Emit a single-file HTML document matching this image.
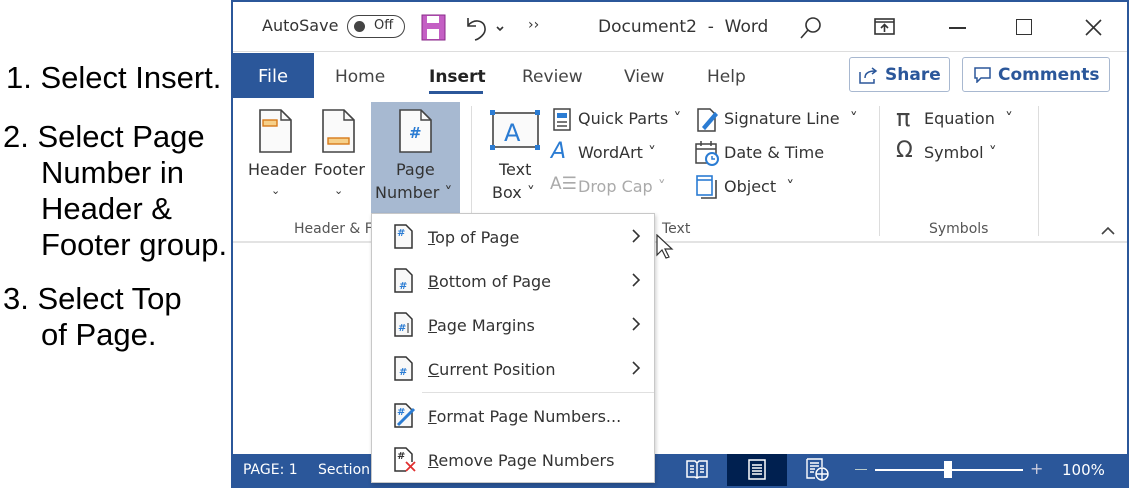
<!DOCTYPE html>
<html><head><meta charset="utf-8"><style>
*{margin:0;padding:0;box-sizing:border-box}
body{width:1131px;height:488px;background:#fff;position:relative;overflow:hidden;font-family:"Liberation Sans",sans-serif}
.a{position:absolute;white-space:nowrap}
.ins{font-size:31px;color:#000;line-height:36px}
.win{position:absolute;left:231px;top:0;width:898px;height:488px;border:2px solid #2b579a;border-bottom:none;background:#fff}
.ui{font-family:"DejaVu Sans",sans-serif;color:#333}
.t{font-size:17px;color:#444}
.r{font-size:16px;color:#333}
.g{font-size:14px;color:#555}
.m{font-size:16px;color:#333}
.ch{font-size:11px}
</style></head><body>
<div class="a ins" style="left:6px;top:60px">1. Select Insert.</div>
<div class="a ins" style="left:3px;top:119px">2. Select Page</div>
<div class="a ins" style="left:41px;top:155px">Number in</div>
<div class="a ins" style="left:41px;top:191px">Header &amp;</div>
<div class="a ins" style="left:41px;top:227px">Footer group.</div>
<div class="a ins" style="left:3px;top:281px">3. Select Top</div>
<div class="a ins" style="left:41px;top:317px">of Page.</div>

<div class="win"></div>
<!-- title bar -->
<div class="a ui" style="left:262px;top:16px;font-size:16px;color:#333">AutoSave</div>
<div class="a" style="left:347px;top:15px;width:58px;height:23px;border:1.5px solid #444;border-radius:12px"></div>
<div class="a" style="left:354px;top:21px;width:11px;height:11px;border-radius:50%;background:#444"></div>
<div class="a ui" style="left:374px;top:18px;font-size:13px;color:#333">Off</div>
<svg class="a" style="left:421px;top:14px" width="26" height="28"><rect x="1" y="1" width="23" height="25" fill="#c45fc4" stroke="#8a2a8a"/><rect x="6" y="2" width="12" height="7" fill="#fff"/><rect x="6" y="15" width="12" height="10" fill="#fff"/></svg>
<svg class="a" style="left:464px;top:14px" width="50" height="28" fill="none" stroke="#333" stroke-width="1.6"><path d="M4 4v8h8M4 12c4-7 16-7 17 2 1 6-6 11-10 12"/><path d="M33 13l3 3 3-3"/></svg>
<div class="a ui" style="left:528px;top:17px;font-size:14px;color:#333">››</div>
<div class="a ui" style="left:598px;top:17px;font-size:17px;color:#333">Document2 &nbsp;- &nbsp;Word</div>
<svg class="a" style="left:799px;top:16px" width="24" height="24" fill="none" stroke="#333" stroke-width="1.6"><circle cx="14" cy="9" r="7"/><path d="M9 14L2 22"/></svg>
<svg class="a" style="left:874px;top:18px" width="22" height="18" fill="none" stroke="#333" stroke-width="1.6"><rect x="1" y="1" width="19" height="15"/><path d="M1 4h19M10.5 14V7M7 10l3.5-3.5L14 10"/></svg>
<div class="a" style="left:949px;top:27px;width:17px;height:1.6px;background:#333"></div>
<div class="a" style="left:1016px;top:19px;width:16px;height:16px;border:1.6px solid #333"></div>
<svg class="a" style="left:1085px;top:19px" width="18" height="18" stroke="#333" stroke-width="1.6"><path d="M1 1l15 15M16 1L1 16"/></svg>
<div class="a" style="left:233px;top:51px;width:894px;height:1px;background:#ddd"></div>
<!-- tabs -->
<div class="a" style="left:233px;top:53px;width:81px;height:45px;background:#2b579a"></div>
<div class="a ui" style="left:258px;top:66px;font-size:18px;color:#fff">File</div>
<div class="a ui t" style="left:335px;top:67px">Home</div>
<div class="a ui t" style="left:429px;top:67px;color:#222;font-weight:bold">Insert</div>
<div class="a" style="left:429px;top:91px;width:54px;height:3px;background:#2b579a"></div>
<div class="a ui t" style="left:522px;top:67px">Review</div>
<div class="a ui t" style="left:624px;top:67px">View</div>
<div class="a ui t" style="left:707px;top:67px">Help</div>
<div class="a" style="left:849px;top:57px;width:101px;height:35px;border:1px solid #a8b8d0;border-radius:3px"></div>
<svg class="a" style="left:859px;top:66px" width="20" height="18" fill="none" stroke="#2b579a" stroke-width="1.5"><path d="M1 6v11h14v-4M6 12c0-5 4-7 10-7M13 2l4 3-4 3"/></svg>
<div class="a ui" style="left:885px;top:65px;font-size:17px;font-weight:bold;color:#2b579a">Share</div>
<div class="a" style="left:962px;top:57px;width:148px;height:35px;border:1px solid #a8b8d0;border-radius:3px"></div>
<svg class="a" style="left:974px;top:67px" width="18" height="16" fill="none" stroke="#2b579a" stroke-width="1.5"><path d="M1 1h15v10H7l-4 4v-4H1z"/></svg>
<div class="a ui" style="left:998px;top:65px;font-size:17px;font-weight:bold;color:#2b579a">Comments</div>
<!-- ribbon -->
<div class="a" style="left:233px;top:241px;width:894px;height:2px;background:#e3e3e3"></div>
<svg class="a" style="left:258px;top:108px" width="36" height="46"><path d="M2 2h21l10 10v32H2z" fill="#fafafa" stroke="#444" stroke-width="1.6"/><path d="M23 2v10h10" fill="none" stroke="#444" stroke-width="1.4"/><rect x="5" y="12" width="14" height="6" fill="#f6d08a" stroke="#d87a1a" stroke-width="1.4"/></svg>
<svg class="a" style="left:321px;top:108px" width="36" height="46"><path d="M2 2h21l10 10v32H2z" fill="#fafafa" stroke="#444" stroke-width="1.6"/><path d="M23 2v10h10" fill="none" stroke="#444" stroke-width="1.4"/><rect x="7" y="30" width="21" height="6" fill="#f6d08a" stroke="#d87a1a" stroke-width="1.4"/></svg>
<div class="a ui r" style="left:248px;top:160px">Header</div>
<div class="a ui r" style="left:314px;top:160px">Footer</div>
<div class="a ui ch" style="left:271px;top:184px">⌄</div>
<div class="a ui ch" style="left:334px;top:184px">⌄</div>
<div class="a" style="left:371px;top:102px;width:89px;height:111px;background:#a7b9d1"></div>
<svg class="a" style="left:398px;top:108px" width="36" height="46"><path d="M2 2h21l10 10v32H2z" fill="#fafafa" stroke="#444" stroke-width="1.6"/><path d="M23 2v10h10" fill="none" stroke="#444" stroke-width="1.4"/><text x="11" y="30" font-size="15" font-weight="bold" fill="#2b7cd3" font-family="DejaVu Sans">#</text></svg>
<div class="a ui r" style="left:396px;top:160px">Page</div>
<div class="a ui r" style="left:375px;top:183px">Number ˅</div>
<div class="a" style="left:471px;top:106px;width:1px;height:118px;background:#ddd"></div>
<div class="a ui g" style="left:294px;top:221px">Header &amp; F</div>
<svg class="a" style="left:490px;top:110px" width="52" height="40"><rect x="3" y="3" width="45" height="34" fill="#fafafa" stroke="#444" stroke-width="1.6"/><g fill="#2b7cd3"><rect x="0" y="0" width="5" height="5"/><rect x="45" y="0" width="5" height="5"/><rect x="0" y="35" width="5" height="5"/><rect x="45" y="35" width="5" height="5"/></g><text x="14" y="31" font-size="24" fill="#2b7cd3" font-family="DejaVu Sans">A</text></svg>
<div class="a ui r" style="left:499px;top:160px">Text</div>
<div class="a ui r" style="left:492px;top:183px">Box ˅</div>
<svg class="a" style="left:553px;top:108px" width="20" height="24"><rect x="1" y="1" width="16" height="21" fill="#fff" stroke="#444" stroke-width="1.5"/><rect x="4" y="5" width="10" height="5" fill="#2b7cd3"/><rect x="4" y="13" width="10" height="2" fill="#777"/><rect x="4" y="17" width="10" height="2" fill="#777"/></svg>
<div class="a ui r" style="left:578px;top:109px">Quick Parts ˅</div>
<div class="a ui" style="left:551px;top:139px;font-size:22px;color:#2b7cd3;font-style:italic">A</div>
<div class="a ui r" style="left:578px;top:143px">WordArt ˅</div>
<div class="a ui" style="left:550px;top:174px;font-size:17px;color:#aaa">A☰</div>
<div class="a ui r" style="left:578px;top:177px;color:#aaa">Drop Cap ˅</div>
<svg class="a" style="left:697px;top:107px" width="22" height="26" fill="none" stroke="#444" stroke-width="1.5"><path d="M1 2h12l5 5v17H1z"/><path d="M6 20L18 6l2 2L8 22z" stroke="#2b7cd3" fill="#2b7cd3"/></svg>
<div class="a ui r" style="left:724px;top:109px">Signature Line &nbsp;˅</div>
<svg class="a" style="left:695px;top:140px" width="26" height="26" fill="none" stroke="#444" stroke-width="1.5"><rect x="1" y="4" width="20" height="19"/><path d="M1 9h20M6 1v5M16 1v5"/><circle cx="17" cy="19" r="6" fill="#fff" stroke="#2b7cd3" stroke-width="2"/><path d="M17 16v3h3" stroke="#2b7cd3"/></svg>
<div class="a ui r" style="left:724px;top:143px">Date &amp; Time</div>
<svg class="a" style="left:696px;top:175px" width="22" height="24" fill="none" stroke-width="1.6"><rect x="1" y="1" width="15" height="19" stroke="#2b7cd3"/><path d="M1 5h15" stroke="#2b7cd3"/><path d="M5 23h15V5" stroke="#444"/></svg>
<div class="a ui r" style="left:724px;top:177px">Object &nbsp;˅</div>
<div class="a ui g" style="left:662px;top:221px">Text</div>
<div class="a" style="left:879px;top:106px;width:1px;height:130px;background:#ddd"></div>
<div class="a ui" style="left:896px;top:104px;font-size:24px;color:#444">π</div>
<div class="a ui r" style="left:924px;top:109px">Equation &nbsp;˅</div>
<div class="a ui" style="left:896px;top:138px;font-size:22px;color:#444">Ω</div>
<div class="a ui r" style="left:924px;top:143px">Symbol ˅</div>
<div class="a ui g" style="left:929px;top:221px">Symbols</div>
<div class="a" style="left:1038px;top:106px;width:1px;height:130px;background:#ddd"></div>
<svg class="a" style="left:1100px;top:225px" width="16" height="12" fill="none" stroke="#444" stroke-width="1.6"><path d="M2 9l6-6 6 6"/></svg>
<!-- status bar -->
<div class="a" style="left:231px;top:454px;width:898px;height:34px;background:#2b579a"></div>
<div class="a ui" style="left:243px;top:462px;font-size:14px;color:#fff">PAGE: 1</div>
<div class="a ui" style="left:318px;top:462px;font-size:14px;color:#fff">Section:</div>
<svg class="a" style="left:686px;top:459px" width="22" height="20" fill="none" stroke="#fff" stroke-width="1.5"><path d="M1 2h8l2 2 2-2h8v16h-8l-2 1-2-1H1z M11 4v15 M4 7h4M4 10h4M4 13h4M14 7h4M14 10h4M14 13h4"/></svg>
<div class="a" style="left:727px;top:454px;width:60px;height:32px;background:#002050"></div>
<svg class="a" style="left:748px;top:459px" width="18" height="22" fill="none" stroke="#fff" stroke-width="1.5"><rect x="1" y="1" width="16" height="19"/><path d="M4 6h10M4 9h10M4 12h10M4 15h10"/></svg>
<svg class="a" style="left:806px;top:458px" width="24" height="24" fill="none" stroke="#fff" stroke-width="1.4"><path d="M1 1h15v8M1 1v19h8M4 5h9M4 8h9M4 11h5M4 14h4"/><circle cx="16" cy="16" r="6"/><path d="M10 16h12M16 10v12"/></svg>
<div class="a" style="left:855px;top:469px;width:12px;height:1px;background:#bcc"></div>
<div class="a" style="left:875px;top:469px;width:148px;height:2px;background:#fff"></div>
<div class="a" style="left:944px;top:461px;width:8px;height:17px;background:#fff"></div>
<div class="a ui" style="left:1030px;top:459px;font-size:16px;color:#ccd">+</div>
<div class="a ui" style="left:1062px;top:461px;font-size:15px;color:#fff">100%</div>
<!-- dropdown -->
<div class="a" style="left:371px;top:213px;width:284px;height:270px;background:#fff;border:1px solid #c8c8c8;box-shadow:1px 2px 4px rgba(0,0,0,.2)"></div>
<svg class="a" style="left:394px;top:224px" width="20" height="26"><path d="M1 1h11l6 6v17H1z" fill="#f8f8f8" stroke="#333" stroke-width="1.5"/><text x="3" y="12" font-size="10" font-weight="bold" fill="#2b7cd3" font-family="DejaVu Sans">#</text></svg>
<svg class="a" style="left:394px;top:268px" width="20" height="26"><path d="M1 1h11l6 6v17H1z" fill="#f8f8f8" stroke="#333" stroke-width="1.5"/><text x="5" y="21" font-size="10" font-weight="bold" fill="#2b7cd3" font-family="DejaVu Sans">#</text></svg>
<svg class="a" style="left:394px;top:312px" width="20" height="26"><path d="M1 1h11l6 6v17H1z" fill="#f8f8f8" stroke="#333" stroke-width="1.5"/><text x="4" y="19" font-size="10" font-weight="bold" fill="#2b7cd3" font-family="DejaVu Sans">#</text><path d="M14 11v10" stroke="#333"/></svg>
<svg class="a" style="left:394px;top:356px" width="20" height="26"><path d="M1 1h11l6 6v17H1z" fill="#f8f8f8" stroke="#333" stroke-width="1.5"/><text x="5" y="19" font-size="10" font-weight="bold" fill="#2b7cd3" font-family="DejaVu Sans">#</text></svg>
<svg class="a" style="left:394px;top:403px" width="24" height="26"><path d="M1 1h11l6 6v17H1z" fill="#f8f8f8" stroke="#333" stroke-width="1.5"/><text x="3" y="12" font-size="10" font-weight="bold" fill="#2b7cd3" font-family="DejaVu Sans">#</text><path d="M4 22l16-16" stroke="#2b7cd3" stroke-width="3"/></svg>
<svg class="a" style="left:394px;top:447px" width="24" height="26"><path d="M12 24H1V1h11l6 6v8" fill="none" stroke="#333" stroke-width="1.5"/><text x="3" y="12" font-size="10" font-weight="bold" fill="#333" font-family="DejaVu Sans">#</text><path d="M12 15l9 9M21 15l-9 9" stroke="#e03030" stroke-width="1.8"/></svg>
<div class="a ui m" style="left:428px;top:228px"><u>T</u>op of Page</div>
<div class="a ui m" style="left:428px;top:272px"><u>B</u>ottom of Page</div>
<div class="a ui m" style="left:428px;top:316px"><u>P</u>age Margins</div>
<div class="a ui m" style="left:428px;top:360px"><u>C</u>urrent Position</div>
<div class="a" style="left:422px;top:392px;width:232px;height:1px;background:#e0e0e0"></div>
<div class="a ui m" style="left:428px;top:407px"><u>F</u>ormat Page Numbers...</div>
<div class="a ui m" style="left:428px;top:451px"><u>R</u>emove Page Numbers</div>
<svg class="a" style="left:630px;top:228px" width="12" height="160" fill="none" stroke="#333" stroke-width="1.6"><path d="M3 2l6 6-6 6M3 46l6 6-6 6M3 90l6 6-6 6M3 134l6 6-6 6"/></svg>
<svg class="a" style="left:656px;top:234px" width="18" height="26"><path d="M1 1v20l5-5 4 8 3-1-4-8h7z" fill="#fff" stroke="#333" stroke-width="1.2"/></svg>
</body></html>
